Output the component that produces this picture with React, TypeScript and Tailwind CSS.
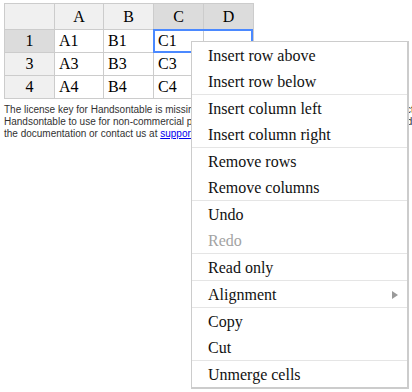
import React from 'react';

/**
 * Handsontable 风格的表格 + 右键菜单
 */

const serif = "font-['Liberation_Serif','Times_New_Roman',serif]";

type Cell = { text: string; kind: 'corner' | 'colHead' | 'rowHead' | 'data'; selected?: boolean };

const colWidths = ['w-[50px]', 'w-[49px]', 'w-[50px]', 'w-[50px]', 'w-[50px]'];

const rows: Cell[][] = [
  [
    { text: '', kind: 'corner' },
    { text: 'A', kind: 'colHead' },
    { text: 'B', kind: 'colHead' },
    { text: 'C', kind: 'colHead', selected: true },
    { text: 'D', kind: 'colHead', selected: true },
  ],
  [
    { text: '1', kind: 'rowHead', selected: true },
    { text: 'A1', kind: 'data' },
    { text: 'B1', kind: 'data' },
    { text: 'C1', kind: 'data' },
    { text: '', kind: 'data' },
  ],
  [
    { text: '3', kind: 'rowHead' },
    { text: 'A3', kind: 'data' },
    { text: 'B3', kind: 'data' },
    { text: 'C3', kind: 'data' },
    { text: '', kind: 'data' },
  ],
  [
    { text: '4', kind: 'rowHead' },
    { text: 'A4', kind: 'data' },
    { text: 'B4', kind: 'data' },
    { text: 'C4', kind: 'data' },
    { text: '', kind: 'data' },
  ],
];

// 菜单分组，组之间有分隔线
const menuGroups: { label: string; disabled?: boolean; submenu?: boolean }[][] = [
  [{ label: 'Insert row above' }, { label: 'Insert row below' }],
  [{ label: 'Insert column left' }, { label: 'Insert column right' }],
  [{ label: 'Remove rows' }, { label: 'Remove columns' }],
  [{ label: 'Undo' }, { label: 'Redo', disabled: true }],
  [{ label: 'Read only' }],
  [{ label: 'Alignment', submenu: true }],
  [{ label: 'Copy' }, { label: 'Cut' }],
  [{ label: 'Unmerge cells' }],
];

const cellClass = (cell: Cell, rowIndex: number, colIndex: number) => {
  const base = [
    colWidths[colIndex],
    rowIndex === 0 ? 'h-[26px]' : 'h-[23px]',
    'border-r border-b border-[#ccc] flex items-center text-[16px] leading-none text-black',
  ];
  if (cell.kind === 'data') {
    base.push('bg-white pl-1');
  } else {
    base.push('justify-center');
    base.push(cell.selected ? 'bg-[#dcdcdc]' : 'bg-[#f0f0f0]');
  }
  return base.join(' ');
};

const ContextMenu: React.FC = () => (
  <div className={`absolute left-[191px] top-[41px] w-[218px] bg-white border border-r-2 border-b-2 border-[#ccc] ${serif}`}>
    {menuGroups.map((group, gi) => (
      <div key={gi} className={gi > 0 ? 'border-t border-[#e5e5e5]' : ''}>
        {group.map((item) => (
          <div
            key={item.label}
            className={`h-[26px] flex items-center justify-between pl-4 pr-2 pt-[2px] text-[16px] whitespace-nowrap ${
              item.disabled ? 'text-[#a3a3a3]' : 'text-[#111]'
            }`}
          >
            <span>{item.label}</span>
            {item.submenu && (
              <svg width="6" height="8" viewBox="0 0 6 8" className="mr-[1px]">
                <path d="M0 0 L6 4 L0 8 Z" fill="#9a9a9a" />
              </svg>
            )}
          </div>
        ))}
      </div>
    ))}
  </div>
);

export default function App() {
  return (
    <div className="relative w-[412px] h-[392px] overflow-hidden bg-white">
      <div className="pt-[3px] pl-1">
        {/* 表格 */}
        <div className={`relative inline-flex flex-col border-l border-t border-[#ccc] ${serif}`}>
          {rows.map((row, ri) => (
            <div key={ri} className="flex">
              {row.map((cell, ci) => (
                <div key={ci} className={cellClass(cell, ri, ci)}>
                  {cell.text}
                </div>
              ))}
            </div>
          ))}
        </div>

        {/* 许可证提示 */}
        <div className="pt-[5px] text-[10px] leading-[12px] text-[#323232] whitespace-nowrap font-['Liberation_Sans',Arial,sans-serif]">
          The license key for Handsontable is missing. Use your purchased key to activate the product. Alternatively, you can activate
          <br />
          Handsontable to use for non-commercial purposes by passing the key: 'non-commercial-and-evaluation'. Read more about it in
          <br />
          the documentation or contact us at{' '}
          <a className="text-[#0000ee] underline" href="#">
            support@handsontable.com
          </a>
          .
        </div>
      </div>

      {/* 选区边框 */}
      <div className="absolute left-[153px] top-[29px] w-[100px] h-[24px] border-2 border-[#4b89ff]" />

      <ContextMenu />
    </div>
  );
}
